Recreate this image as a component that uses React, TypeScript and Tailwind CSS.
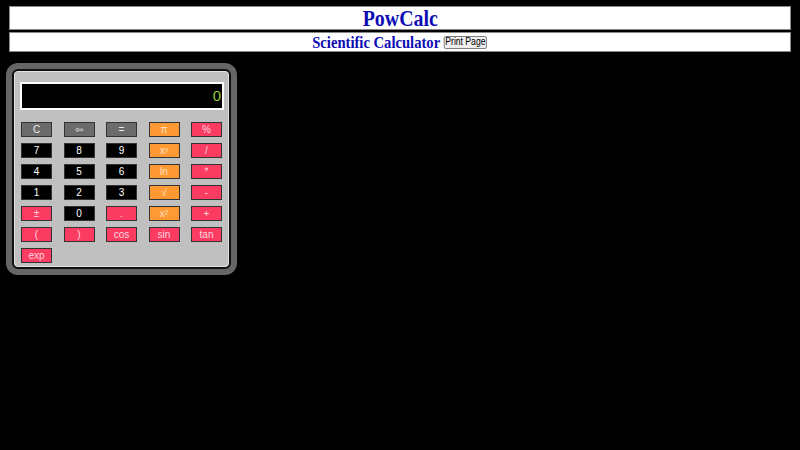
import { useState } from 'react'

type Key = { label: string; kind: 'gray' | 'num' | 'op' | 'fn' }

const keys: Key[] = [
  { label: 'C', kind: 'gray' },
  { label: '⇦', kind: 'gray' },
  { label: '=', kind: 'gray' },
  { label: 'π', kind: 'op' },
  { label: '%', kind: 'fn' },
  { label: '7', kind: 'num' },
  { label: '8', kind: 'num' },
  { label: '9', kind: 'num' },
  { label: 'xʸ', kind: 'op' },
  { label: '/', kind: 'fn' },
  { label: '4', kind: 'num' },
  { label: '5', kind: 'num' },
  { label: '6', kind: 'num' },
  { label: 'ln', kind: 'op' },
  { label: '*', kind: 'fn' },
  { label: '1', kind: 'num' },
  { label: '2', kind: 'num' },
  { label: '3', kind: 'num' },
  { label: '√', kind: 'op' },
  { label: '-', kind: 'fn' },
  { label: '±', kind: 'fn' },
  { label: '0', kind: 'num' },
  { label: '.', kind: 'fn' },
  { label: 'x²', kind: 'op' },
  { label: '+', kind: 'fn' },
  { label: '(', kind: 'fn' },
  { label: ')', kind: 'fn' },
  { label: 'cos', kind: 'fn' },
  { label: 'sin', kind: 'fn' },
  { label: 'tan', kind: 'fn' },
  { label: 'exp', kind: 'fn' },
]

const keyStyle: Record<Key['kind'], string> = {
  gray: 'bg-[#6b6b6b] text-[#eee]',
  num: 'bg-black text-white',
  op: 'bg-[#ff9933] text-[#ffe2c4]',
  fn: 'bg-[#fb3c62] text-[#ffd6df]',
}

export default function App() {
  const [display, setDisplay] = useState('0')

  const press = (label: string) => {
    if (label === 'C') setDisplay('0')
    else if (/^[0-9]$/.test(label)) setDisplay(display === '0' ? label : display + label)
  }

  return (
    <div className="w-full min-h-[450px] bg-black pt-[6px] px-[9px]">
      {/* Title */}
      <div className="bg-white border border-[#888] h-[24px] flex items-center justify-center">
        <h1
          className="text-[24px] font-bold text-[#0c0cb4] leading-none scale-x-[0.83]"
          style={{ fontFamily: '"Liberation Serif", serif' }}
        >
          PowCalc
        </h1>
      </div>
      <div className="mt-[2px] bg-white border border-[#888] h-[20px] flex items-center justify-center">
        <div className="flex items-center gap-[4px] scale-x-[0.86]">
          <h2
            className="text-[17px] font-bold text-[#0c0cb4] leading-none"
            style={{ fontFamily: '"Liberation Serif", serif' }}
          >
            Scientific Calculator
          </h2>
          <button
            onClick={() => window.print()}
            className="h-[13px] px-[1px] text-[10px] leading-none text-black bg-[#efefef] border border-[#767676] rounded-[2px]"
            style={{ fontFamily: '"Liberation Sans", sans-serif' }}
          >
            Print Page
          </button>
        </div>
      </div>

      {/* Calculator */}
      <div className="mt-[11px] -ml-[3px] w-[231px] bg-[#666] rounded-[12px] p-[6px]">
        <div className="border-2 border-[#111] rounded-[6px]">
          <div className="border border-[#e4e4e4] rounded-[4px] bg-[#c0c0c0] pt-[10px] pb-[3px] pl-[5px] pr-[3px]">
            <div
              className="h-[28px] w-[204px] bg-black border-2 border-white flex items-center justify-end pr-[1px] text-[15px] text-[#9acd32]"
              style={{ fontFamily: '"Liberation Sans", sans-serif' }}
            >
              {display}
            </div>
            <div className="mt-[12px] ml-[1px] w-[201px] grid grid-cols-[repeat(5,31px)] justify-between gap-y-[6px]">
              {keys.map((k) => (
                <button
                  key={k.label}
                  onClick={() => press(k.label)}
                  className={`h-[15px] w-[31px] flex items-center justify-center text-[10px] leading-none border border-[#333] ${keyStyle[k.kind]}`}
                  style={{ fontFamily: '"Liberation Sans", sans-serif' }}
                >
                  {k.label}
                </button>
              ))}
            </div>
          </div>
        </div>
      </div>
    </div>
  )
}
